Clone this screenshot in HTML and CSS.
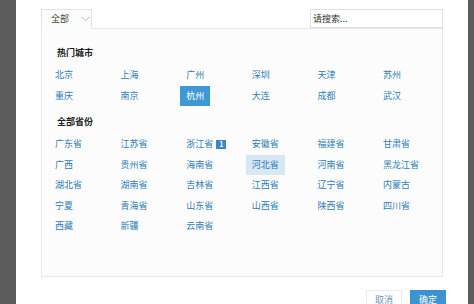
FILE: index.html
```html
<!DOCTYPE html>
<html lang="zh">
<head>
<meta charset="utf-8">
<link rel="stylesheet" href="styles.css">
</head>
<body>
<div class="shade shade-left"></div>
<div class="dialog">
  <div class="toolbar">
    <div class="tab"><span class="tab-label">全部</span>
      <svg class="chev" width="9" height="6" viewBox="0 0 9 6"><path d="M0.5 0.8 L4.5 4.8 L8.5 0.8" fill="none" stroke="#b5b5b5" stroke-width="1"/></svg>
    </div>
    <div class="search">请搜索...</div>
  </div>
  <div class="panel">
    <div class="heading">热门城市</div>
    <div class="grid">
      <span class="item">北京</span><span class="item">上海</span><span class="item">广州</span><span class="item">深圳</span><span class="item">天津</span><span class="item">苏州</span>
      <span class="item">重庆</span><span class="item">南京</span><span class="item"><span class="sel">杭州</span></span><span class="item">大连</span><span class="item">成都</span><span class="item">武汉</span>
    </div>
    <div class="heading heading-2">全部省份</div>
    <div class="grid">
      <span class="item">广东省</span><span class="item">江苏省</span><span class="item">浙江省<span class="badge">1</span></span><span class="item">安徽省</span><span class="item">福建省</span><span class="item">甘肃省</span>
      <span class="item">广西</span><span class="item">贵州省</span><span class="item">海南省</span><span class="item"><span class="hover">河北省</span></span><span class="item">河南省</span><span class="item">黑龙江省</span>
      <span class="item">湖北省</span><span class="item">湖南省</span><span class="item">吉林省</span><span class="item">江西省</span><span class="item">辽宁省</span><span class="item">内蒙古</span>
      <span class="item">宁夏</span><span class="item">青海省</span><span class="item">山东省</span><span class="item">山西省</span><span class="item">陕西省</span><span class="item">四川省</span>
      <span class="item">西藏</span><span class="item">新疆</span><span class="item">云南省</span>
    </div>
  </div>
  <div class="actions">
    <span class="btn btn-cancel">取消</span>
    <span class="btn btn-ok">确定</span>
  </div>
</div>
<div class="shade shade-right"></div>
</body>
</html>
```

FILE: styles.css
```css
html, body {
  margin: 0;
  padding: 0;
}
body {
  width: 474px;
  height: 304px;
  overflow: hidden;
  display: flex;
  background: #fff;
  font-family: "Noto Sans CJK SC", "Noto Sans", sans-serif;
  font-size: 9px;
  color: #333;
}
.shade {
  background: #5c5c5c;
  flex: none;
}
.shade-left { width: 16px; }
.shade-right { width: 6px; }
.dialog {
  flex: 1;
  padding: 9px 0 0 25px;
  box-sizing: border-box;
}
.toolbar {
  width: 402px;
  display: flex;
  justify-content: space-between;
  align-items: flex-start;
  position: relative;
  z-index: 1;
}
.tab {
  width: 51px;
  height: 20px;
  box-sizing: border-box;
  border: 1px solid #e3e3e3;
  border-bottom: 1px solid #fcfcfc;
  background: #fcfcfc;
  display: flex;
  align-items: center;
  padding-left: 9px;
  line-height: 14px;
  color: #444;
  white-space: nowrap;
}
.tab-label {
  flex: none;
}
.chev {
  flex: none;
  margin-left: 12px;
}
.search {
  width: 133px;
  height: 19px;
  box-sizing: border-box;
  border: 1px solid #e0e0e0;
  background: #fff;
  padding-left: 2px;
  line-height: 17px;
  color: #333;
}
.panel {
  width: 402px;
  height: 249px;
  box-sizing: border-box;
  margin-top: -1px;
  border: 1px solid #e8e8e8;
  background: #fcfcfc;
  padding: 17px 0 0 7px;
}
.heading {
  line-height: 14px;
  font-weight: bold;
  color: #222;
  padding-left: 8px;
  margin-bottom: 5px;
}
.heading-2 {
  margin-top: 9px;
}
.grid {
  display: grid;
  grid-template-columns: repeat(6, 65.6px);
}
.item {
  line-height: 20.5px;
  color: #2f7db8;
  white-space: nowrap;
  display: flex;
  align-items: center;
}
.sel, .hover {
  padding: 0 6px;
  line-height: 20px;
}
.item:not(:has(.sel)):not(:has(.hover)) {
  padding-left: 6px;
}
.sel {
  background: #3d98d3;
  color: #fff;
}
.hover {
  background: #d7e7f3;
}
.badge {
  display: inline-block;
  width: 10px;
  height: 9px;
  margin-left: 3px;
  background: #3b86c6;
  color: #fff;
  font-size: 7px;
  line-height: 9px;
  text-align: center;
  font-weight: bold;
}
.actions {
  width: 405px;
  margin-top: 13px;
  display: flex;
  justify-content: flex-end;
  gap: 8px;
}
.btn {
  width: 36px;
  height: 20px;
  box-sizing: border-box;
  text-align: center;
  line-height: 18px;
  border: 1px solid #e3e3e3;
}
.btn-cancel {
  background: #fff;
  color: #6f95b3;
  border-color: #e6eef5;
}
.btn-ok {
  background: #3d93cf;
  border-color: #3d93cf;
  color: #fff;
}
```
